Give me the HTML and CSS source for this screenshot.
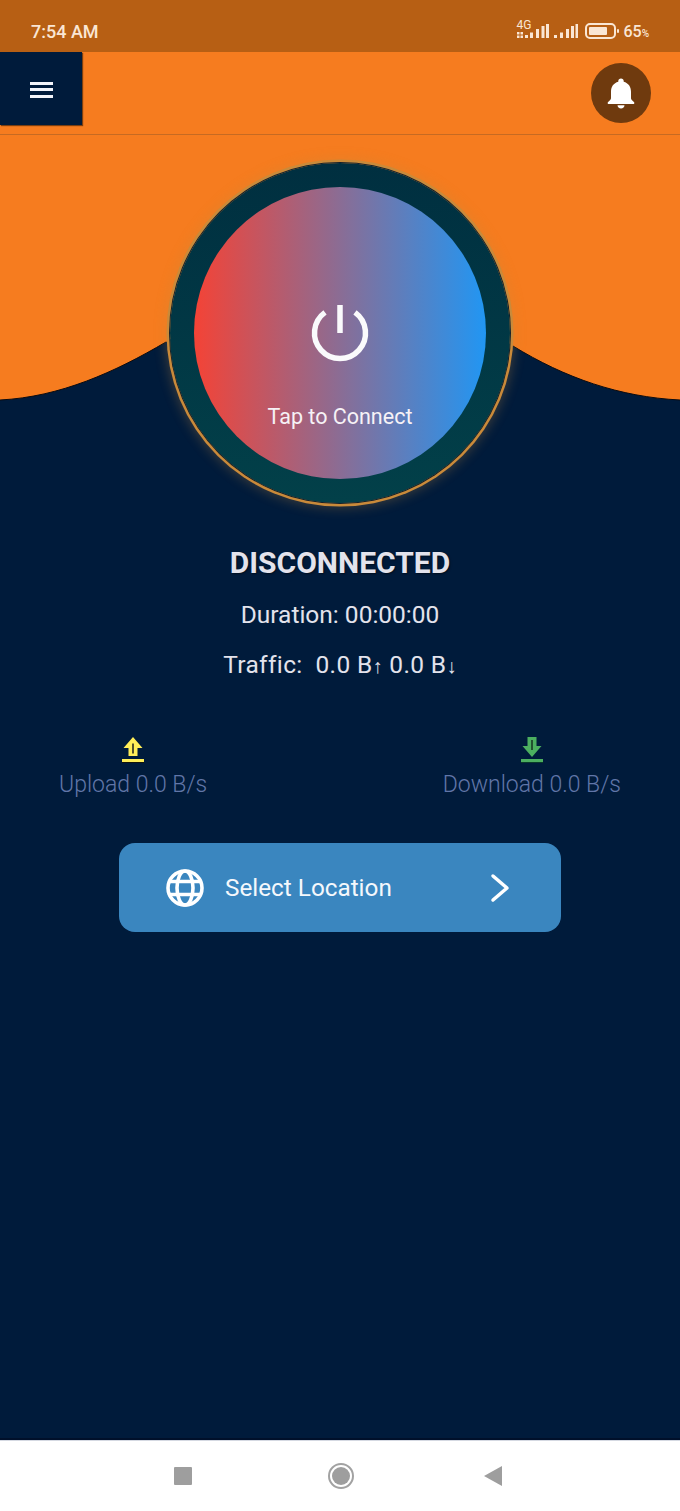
FILE: index.html
```html
<!DOCTYPE html>
<html lang="en">
<head>
    <meta charset="UTF-8">
    <meta name="viewport" content="width=device-width, initial-scale=1.0">
    <title>VPN Home</title>
    <link rel="stylesheet" href="styles.css">
</head>
<body>

<div class="status-bar">
    <span class="clock">7:54 AM</span>
    <div class="status-icons">
        <span class="net-label">4G</span>
        <svg class="signal" width="33" height="18" viewBox="0 0 33 18">
            <path class="fill" d="M1 10h2.500v2.500H1zM1 13.500h2.500V16H1zM4.500 10H7v2.500H4.500zM4.500 13.500H7V16H4.500zM9 13h3v3H9zM14 10.500h3V16h-3zM20 7h3v9h-3zM25.500 4h3v12h-3zM30 2h3v14h-3z"/>
        </svg>
        <svg class="signal" width="24" height="18" viewBox="0 0 24 18">
            <path class="fill" d="M0 13h3v3H0zM6 10.500h3V16H6zM12 7h3v9h-3zM17 4h3v12h-3zM21.500 2h2.500v14h-2.500z"/>
        </svg>
        <svg class="battery" width="36" height="18" viewBox="0 0 36 18">
            <rect class="bat-case" x="1" y="2" width="29" height="14" rx="4"/>
            <rect class="fill" x="4" y="5" width="18" height="8" rx="1"/>
            <rect class="fill" x="32" y="7" width="2" height="4" rx="1"/>
        </svg>
        <span class="percent">65<small>%</small></span>
    </div>
</div>

<main class="main">
    <header class="topbar">
        <button class="menu-btn" aria-label="Menu">
            <span></span><span></span><span></span>
        </button>
        <button class="bell-btn" aria-label="Notifications">
            <svg width="30" height="32" viewBox="0 0 30 32">
                <path class="fill" d="M15 1.500c-1.600 0-2.700 1.100-2.700 2.600v.7C7.600 6 5 9.900 5 14.700v6.300c0 1-.5 1.800-1.300 2.500l-1.600 1.400c-1 1-.4 2.100 1 2.100h23.800c1.400 0 2-1.100 1-2.100l-1.600-1.400c-.8-.7-1.300-1.500-1.300-2.500v-6.300c0-4.800-2.600-8.700-7.300-9.900v-.7c0-1.500-1.100-2.600-2.700-2.600z"/>
                <path class="fill" d="M11.500 28.200h7c0 1.900-1.500 3.300-3.500 3.300s-3.500-1.400-3.500-3.300z"/>
            </svg>
        </button>
    </header>

    <section class="hero">
        <svg class="wave" width="680" height="280" viewBox="0 0 680 280">
            <path class="wave-fill" d="M0 265C60 262 115 237 166 207L340 100L513 211C565 243 620 262 680 265V0H0Z"/>
            <path class="wave-edge" d="M0 265C60 262 115 237 166 207"/>
            <path class="wave-edge" d="M513 211C565 243 620 262 680 265"/>
        </svg>
        <div class="orb">
            <div class="orb-inner">
                <svg class="power" width="58" height="58" viewBox="0 0 58 58">
                    <path d="M14 8.400A25.500 25.500 0 1 0 44 8.400"/>
                    <path d="M29 1V29"/>
                </svg>
                <span class="tap-text">Tap to Connect</span>
            </div>
        </div>
    </section>

    <h1 class="state">DISCONNECTED</h1>
    <p class="info duration">Duration: 00:00:00</p>
    <p class="info traffic">Traffic:  0.0 B<span class="arrow">↑</span> 0.0 B<span class="arrow">↓</span></p>

    <div class="speeds">
        <div class="speed">
            <svg width="24" height="27" viewBox="0 0 24 27">
                <rect class="shadow" x="1" y="23" width="22" height="4"/>
                <path class="up" d="M12 1l9.500 11h-5v8h-9v-8h-5z"/>
                <path class="up-line" d="M12 7.500v10"/>
                <rect class="up" x="1" y="23" width="22" height="3"/>
            </svg>
            <span>Upload 0.0 B/s</span>
        </div>
        <div class="speed">
            <svg width="24" height="27" viewBox="0 0 24 27">
                <rect class="down-shadow" x="1" y="23" width="22" height="4"/>
                <path class="down" d="M12 21l-9.500-11h5V1h9v9h5z"/>
                <path class="down-line" d="M12 4v10"/>
                <rect class="down" x="1" y="23" width="22" height="3"/>
            </svg>
            <span>Download 0.0 B/s</span>
        </div>
    </div>

    <button class="location">
        <svg width="38" height="38" viewBox="0 0 38 38">
            <g class="globe-lines">
                <circle cx="19" cy="19" r="17"/>
                <ellipse cx="19" cy="19" rx="8" ry="17"/>
                <path d="M2 12.500H36M2 25.500H36"/>
            </g>
        </svg>
        <span>Select Location</span>
        <svg class="chevron" width="20" height="30" viewBox="0 0 20 30">
            <path d="M3 3L17 15L3 27"/>
        </svg>
    </button>
</main>

<nav class="navbar">
    <span class="nav-square"></span>
    <span class="nav-circle"><span></span></span>
    <svg width="18" height="20" viewBox="0 0 18 20"><path class="nav-tri" d="M0 10L18 0V20Z"/></svg>
</nav>

</body>
</html>
```

FILE: styles.css
```css
* {
    box-sizing: border-box;
}
body {
    margin: 0;
    height: 1511px;
    display: flex;
    flex-direction: column;
    font-family: 'Roboto', sans-serif;
    background: #001B3B;
    overflow: hidden;
}
p, h1 {
    margin: 0;
}
button {
    font-family: inherit;
    border: none;
    padding: 0;
    cursor: pointer;
}
.fill {
    fill: currentColor;
}

/* Status bar */
.status-bar {
    height: 52px;
    background: #B75F14;
    color: #FAE6D4;
    display: flex;
    align-items: center;
    justify-content: space-between;
    padding: 10px 31px 0;
}
.clock {
    font-size: 18px;
    font-weight: 500;
}
.status-icons {
    display: flex;
    align-items: center;
    position: relative;
}
.net-label {
    position: absolute;
    left: 0;
    top: -3px;
    font-size: 12px;
    line-height: 12px;
}
.signal {
    margin-right: 5px;
    display: block;
}
.battery {
    display: block;
    margin-left: 2px;
    margin-right: 2px;
}
.bat-case {
    fill: none;
    stroke: currentColor;
    stroke-width: 2;
}
.percent {
    font-size: 16px;
    font-weight: 500;
}
.percent small {
    font-size: 10px;
}

/* Top bar */
.main {
    flex: 1;
    display: flex;
    flex-direction: column;
    align-items: center;
    background: #001B3B;
    border-bottom: 2px solid #00102A;
}
.topbar {
    width: 100%;
    height: 83px;
    background: #F67C1F;
    border-bottom: 1px solid #C66A22;
    display: flex;
    justify-content: space-between;
    align-items: flex-start;
    padding-right: 29px;
}
.menu-btn {
    width: 82px;
    height: 73px;
    background: #001B3B;
    box-shadow: 1px 1px 1px rgba(0, 0, 0, 0.5);
    display: flex;
    flex-direction: column;
    align-items: center;
    justify-content: center;
    gap: 3.500px;
    padding-top: 2px;
}
.menu-btn span {
    width: 23px;
    height: 3px;
    background: #F2F4FA;
}
.bell-btn {
    width: 60px;
    height: 60px;
    margin-top: 11px;
    border-radius: 50%;
    background: #6F3A0E;
    color: #fff;
    display: flex;
    align-items: center;
    justify-content: center;
}

/* Hero */
.hero {
    position: relative;
    width: 100%;
    display: flex;
    justify-content: center;
    padding-top: 28px;
    height: 368px;
}
.wave {
    position: absolute;
    left: 0;
    top: 0;
}
.wave-fill {
    fill: #F67C1F;
}
.wave-edge {
    fill: none;
    stroke: #0B0B10;
    stroke-width: 1;
}
.orb {
    position: relative;
    width: 340px;
    height: 340px;
    border-radius: 50%;
    background: linear-gradient(180deg, #002F40, #024049);
    box-shadow: 0 0 0 1px #14202A, 0 0 0 3.500px #C98A3A, 0 0 12px 5px rgba(200, 140, 60, 0.3);
    display: flex;
    align-items: center;
    justify-content: center;
}
.orb-inner {
    width: 292px;
    height: 292px;
    border-radius: 50%;
    background: linear-gradient(90deg, #F44336, #2196F3);
    display: flex;
    flex-direction: column;
    align-items: center;
    padding-top: 117px;
    color: #fff;
}
.power {
    display: block;
    overflow: visible;
}
.power path {
    fill: none;
    stroke: #FAFAFC;
    stroke-width: 5.500;
}
.tap-text {
    margin-top: 43px;
    font-size: 21.500px;
    line-height: 24px;
    color: #F6F2F6;
}

/* Info text */
.state {
    margin-top: 44px;
    font-size: 30px;
    line-height: 32px;
    font-weight: 700;
    color: #E3E3EC;
    text-shadow: 1px 1px 2px rgba(0, 0, 0, 0.5);
}
.info {
    font-size: 24.500px;
    line-height: 30px;
    color: #E3E3EC;
    white-space: pre;
}
.duration {
    margin-top: 21px;
}
.traffic {
    margin-top: 20px;
    letter-spacing: 0.35px;
}
.arrow {
    font-size: 20px;
}

/* Speeds */
.speeds {
    width: 100%;
    display: flex;
    justify-content: space-between;
    padding: 0 59px;
    margin-top: 55px;
}
.speed {
    display: flex;
    flex-direction: column;
    align-items: center;
    gap: 9px;
    font-size: 23px;
    line-height: 26px;
    font-weight: 300;
    color: #6176A8;
}
.speed svg {
    display: block;
}
.up {
    fill: #FFEE58;
}
.up-line {
    stroke: #1A1C1C;
    stroke-width: 1.500;
}
.shadow {
    fill: #14140C;
}
.down {
    fill: #4CAF60;
}
.down-line {
    stroke: #14321F;
    stroke-width: 1.500;
}
.down-shadow {
    fill: #0A3A2A;
}

/* Location button */
.location {
    width: 442px;
    height: 89px;
    margin-top: 45px;
    border-radius: 16px;
    background: #3A86BF;
    color: #F4F8FC;
    display: flex;
    align-items: center;
    gap: 21px;
    padding: 0 51px 0 47px;
    font-size: 24.300px;
    text-align: left;
}
.globe-lines {
    fill: none;
    stroke: #fff;
    stroke-width: 3.600;
}
.chevron {
    margin-left: auto;
}
.chevron path {
    fill: none;
    stroke: #fff;
    stroke-width: 3.500;
    stroke-linecap: round;
    stroke-linejoin: round;
}

/* Android nav */
.navbar {
    height: 71px;
    flex-shrink: 0;
    background: #fff;
    border-top: 1px solid #D5D9E2;
    display: flex;
    align-items: center;
    justify-content: center;
    padding-right: 4px;
}
.nav-square {
    width: 18px;
    height: 18px;
    margin-right: 136px;
    border-radius: 1px;
    background: #9E9E9E;
}
.nav-circle {
    width: 26px;
    height: 26px;
    margin-right: 130px;
    border-radius: 50%;
    border: 2px solid #A2A2A2;
    display: flex;
    align-items: center;
    justify-content: center;
}
.nav-circle span {
    width: 18px;
    height: 18px;
    border-radius: 50%;
    background: #9E9E9E;
}
.nav-tri {
    fill: #9E9E9E;
}
```
